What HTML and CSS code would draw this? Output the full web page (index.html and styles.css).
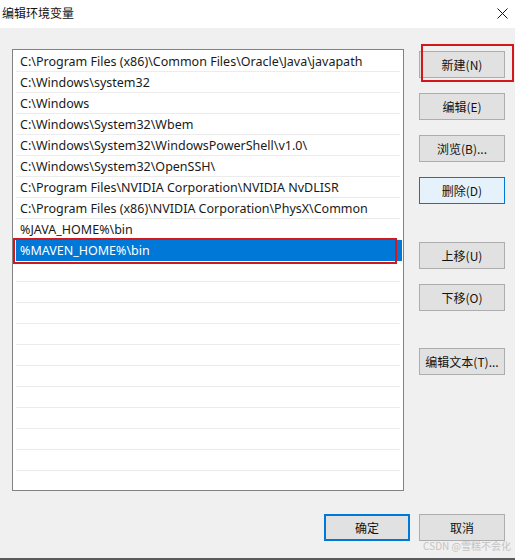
FILE: index.html
```html
<!DOCTYPE html>
<html lang="zh-CN">
<head>
<meta charset="utf-8">
<title>编辑环境变量</title>
<link rel="stylesheet" href="styles.css">
</head>
<body>
<div class="window">
  <header class="titlebar">
    <span class="title">编辑环境变量</span>
    <span class="close" aria-label="关闭">
      <svg width="11" height="11" viewBox="0 0 11 11"><path d="M0.5 0.5L10.5 10.5M10.5 0.5L0.5 10.5" stroke="#111" stroke-width="1" fill="none"/></svg>
    </span>
  </header>

  <main class="content">
    <div class="list">
      <div class="row">C:\Program Files (x86)\Common Files\Oracle\Java\javapath</div>
      <div class="row">C:\Windows\system32</div>
      <div class="row">C:\Windows</div>
      <div class="row">C:\Windows\System32\Wbem</div>
      <div class="row">C:\Windows\System32\WindowsPowerShell\v1.0\</div>
      <div class="row">C:\Windows\System32\OpenSSH\</div>
      <div class="row">C:\Program Files\NVIDIA Corporation\NVIDIA NvDLISR</div>
      <div class="row">C:\Program Files (x86)\NVIDIA Corporation\PhysX\Common</div>
      <div class="row">%JAVA_HOME%\bin</div>
      <div class="row selected marked">%MAVEN_HOME%\bin</div>
      <div class="row"></div>
      <div class="row"></div>
      <div class="row"></div>
      <div class="row"></div>
      <div class="row"></div>
      <div class="row"></div>
      <div class="row"></div>
      <div class="row"></div>
      <div class="row"></div>
      <div class="row"></div>
      <div class="row"></div>
      <div class="row"></div>
    </div>

    <div class="side">
      <button class="btn marked">新建(N)</button>
      <button class="btn">编辑(E)</button>
      <button class="btn">浏览(B)...</button>
      <button class="btn hover">删除(D)</button>
      <button class="btn group">上移(U)</button>
      <button class="btn">下移(O)</button>
      <button class="btn group2">编辑文本(T)...</button>
    </div>
  </main>

  <footer class="actions">
    <button class="btn default">确定</button>
    <button class="btn">取消</button>
  </footer>

  <div class="watermark">CSDN @雪糕不会化</div>
</div>
</body>
</html>
```

FILE: styles.css
```css
* {
  box-sizing: border-box;
}

html, body {
  margin: 0;
  padding: 0;
}

body {
  width: 515px;
  height: 560px;
  overflow: hidden;
  font-family: "Noto Sans", "Noto Sans CJK SC", sans-serif;
  font-size: 12px;
  color: #000;
  background: #f0f0f0;
}

.window {
  position: relative;
  width: 515px;
  height: 560px;
  display: flex;
  flex-direction: column;
  background: #f0f0f0;
  border-bottom: 2px solid #5a5a5a;
}

/* title bar */
.titlebar {
  height: 28px;
  flex: none;
  background: #fff;
  display: flex;
  align-items: center;
  justify-content: space-between;
  padding: 0 7px 2px 2px;
}

.title {
  font-family: "Noto Sans CJK SC", sans-serif;
  font-size: 12px;
  color: #111;
  line-height: 1;
}

.close {
  display: flex;
  width: 11px;
  height: 11px;
}

/* list + side buttons */
.content {
  display: flex;
  padding: 21px 0 0 12px;
}

.list {
  width: 392px;
  height: 442px;
  background: #fff;
  border: 1px solid #828282;
  padding: 1px 3px 0 3px;
  overflow: hidden;
}

.row {
  position: relative;
  height: 21px;
  border-bottom: 1px solid #ececec;
  padding: 1px 0 0 4px;
  font-size: 12.5px;
  line-height: 20px;
  white-space: nowrap;
  color: #1a1a1a;
}

.row.selected {
  background: #0078d7;
  color: #fff;
  border-bottom-color: #0078d7;
  margin-right: -2px;
}

.row.marked::after {
  content: "";
  position: absolute;
  left: -3px;
  right: 5px;
  top: -2px;
  bottom: -4px;
  border: 2px solid #d3171d;
}

.side {
  display: flex;
  flex-direction: column;
  gap: 15px;
  margin-left: 15px;
  padding-top: 2px;
}

.btn {
  position: relative;
  width: 86px;
  height: 27px;
  margin: 0;
  padding: 0;
  background: #e1e1e1;
  border: 1px solid #adadad;
  font-family: "Noto Sans CJK SC", sans-serif;
  font-size: 12px;
  color: #111;
  line-height: 1;
}

.btn.hover {
  background: #e5f1fb;
  border-color: #0078d7;
}

.btn.group {
  margin-top: 23px;
}

.btn.group2 {
  margin-top: 22px;
}

.btn.marked::after {
  content: "";
  position: absolute;
  left: 1px;
  top: -8px;
  width: 89px;
  height: 34px;
  border: 2px solid #d3171d;
}

/* dialog buttons */
.actions {
  display: flex;
  justify-content: flex-end;
  gap: 9px;
  padding: 23px 10px 0 0;
}

.btn.default {
  border: 2px solid #0078d7;
}

.watermark {
  position: absolute;
  right: 4px;
  bottom: 5px;
  font-family: "Noto Sans CJK SC", sans-serif;
  font-size: 10px;
  color: #c4c4c4;
}
```
